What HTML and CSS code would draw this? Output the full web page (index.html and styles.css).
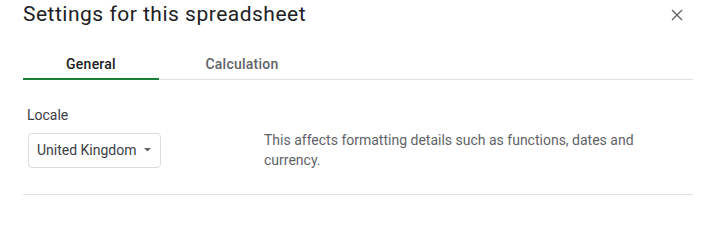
FILE: index.html
```html
<!DOCTYPE html>
<html lang="en">
<head>
<meta charset="utf-8">
<title>Settings for this spreadsheet</title>
<link rel="stylesheet" href="styles.css">
</head>
<body>
<div class="dialog">
  <div class="header">
    <h1 class="title">Settings for this spreadsheet</h1>
    <button class="close" aria-label="Close">
      <svg width="12" height="12" viewBox="0 0 12 12"><path d="M1 1L11 11M11 1L1 11" stroke="#5f6368" stroke-width="1.4" fill="none"/></svg>
    </button>
  </div>
  <div class="tabs">
    <div class="tab active">General</div>
    <div class="tab">Calculation</div>
  </div>
  <div class="section">
    <div class="label">Locale</div>
    <div class="row">
      <div class="select">
        <span class="select-text">United Kingdom</span>
        <svg class="arrow" width="7" height="4" viewBox="0 0 7 4"><polygon points="0,0 7,0 3.5,3.5" fill="#5f6368"/></svg>
      </div>
      <p class="desc">This affects formatting details such as functions, dates and currency.</p>
    </div>
  </div>
</div>
</body>
</html>
```
FILE: styles.css
```css
html, body {
  margin: 0;
  padding: 0;
  background: #ffffff;
}
body {
  font-family: Roboto, "Noto Sans", Arial, sans-serif;
  color: #202124;
}
.dialog {
  padding: 0 22px 0 23px;
}
.header {
  display: flex;
  align-items: center;
  justify-content: space-between;
  height: 28px;
}
.title {
  margin: 0;
  font-size: 21px;
  font-weight: 400;
  line-height: 28px;
  letter-spacing: 0.5px;
  color: #202124;
}
.close {
  width: 24px;
  height: 24px;
  margin: 2px 4px 0 0;
  padding: 0;
  border: none;
  background: transparent;
  display: flex;
  align-items: center;
  justify-content: center;
}
.tabs {
  display: flex;
  margin-top: 20px;
  border-bottom: 1px solid #e0e0e0;
}
.tab {
  box-sizing: border-box;
  width: 136px;
  height: 32px;
  padding-top: 2px;
  display: flex;
  align-items: center;
  justify-content: center;
  font-size: 14px;
  line-height: 20px;
  font-weight: 500;
  letter-spacing: 0.25px;
  color: #5f6368;
  border-bottom: 2px solid transparent;
  margin-bottom: -1px;
}
.tab + .tab {
  margin-left: 15px;
}
.tab.active {
  color: #202124;
  border-bottom-color: #188038;
}
.section {
  padding: 25px 0 24px 1px;
  border-bottom: 1px solid #e0e0e0;
}
.label {
  font-size: 14px;
  line-height: 20px;
  color: #3c4043;
  padding-left: 3px;
}
.row {
  display: flex;
  align-items: center;
  margin-top: 5px;
}
.select {
  box-sizing: border-box;
  width: 133px;
  height: 35px;
  margin-left: 4px;
  border: 1px solid #dadce0;
  border-radius: 4px;
  display: flex;
  align-items: center;
  padding: 0 9px 0 8px;
}
.select-text {
  font-size: 14px;
  line-height: 20px;
  color: #3c4043;
  flex: 1;
}
.arrow {
  display: block;
}
.desc {
  margin: 0 0 0 103px;
  max-width: 400px;
  font-size: 14px;
  line-height: 20px;
  color: #5f6368;
}
```
